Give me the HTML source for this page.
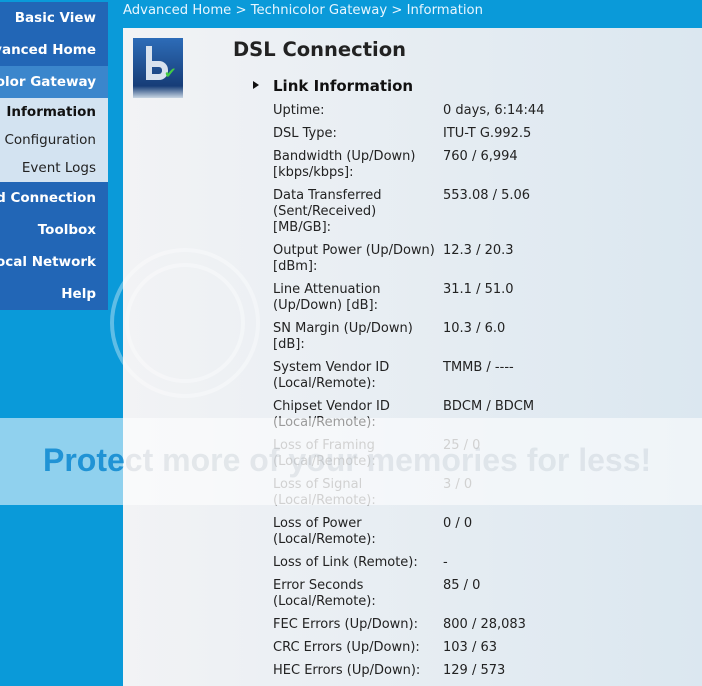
<!DOCTYPE html>
<html><head><meta charset="utf-8"><style>
*{margin:0;padding:0;box-sizing:border-box}
body{width:702px;height:686px;overflow:hidden;background:#0a9ad9;font-family:"DejaVu Sans","Liberation Sans",sans-serif;position:relative}
.crumb{position:absolute;left:123px;top:3px;color:#e8f6ff;font-size:13.2px}
.side{position:absolute;left:0;top:2px;width:108px}
.side div{height:32px;line-height:32px;text-align:right;padding-right:12px;color:#fff;font-weight:bold;font-size:13.5px;background:#2266b6;white-space:nowrap;overflow:hidden;direction:rtl}
.side div.sel{background:#3b86cc}
.side div.sub{background:#d3e3f1;color:#222;font-weight:normal;height:28px;line-height:28px}
.side div.sub.b{font-weight:bold;color:#111}
.panel{position:absolute;left:123px;top:28px;right:0;bottom:0;background:linear-gradient(90deg,#f2f3f5,#dbe7f0)}
.logo{position:absolute;left:133px;top:38px;width:50px;height:60px;background:linear-gradient(#2d6cb8,#173d77 80%,#c8d5e2);overflow:hidden}
.lb1{position:absolute;left:13px;top:8px;width:6px;height:34px;background:#d8e2ee}
.lb2{position:absolute;left:13px;top:23px;width:22px;height:19px;border:6px solid #d8e2ee;border-left:none;border-radius:0 9px 9px 0}
.ck{position:absolute;left:31px;top:26px;color:#4c4;font-size:15px;font-weight:bold}
h1{position:absolute;left:233px;top:38px;font-size:19.5px;color:#222;font-weight:bold}
h2{position:absolute;left:273px;top:77px;font-size:15px;color:#111;font-weight:bold}
.arr{position:absolute;left:253px;top:81px;width:0;height:0;border-left:6px solid #111;border-top:4px solid transparent;border-bottom:4px solid transparent}
.r{position:absolute;left:273px;font-size:13px;line-height:16px;color:#222}
.r b{font-weight:normal;position:absolute;left:170px;top:0;white-space:nowrap}
.g{color:#999}
.band{position:absolute;left:0;top:418px;width:702px;height:87px;background:rgba(255,255,255,.55)}
.wm{position:absolute;left:43px;top:442px;font-size:32px;font-weight:bold;color:rgba(20,140,210,.9);font-family:"Liberation Sans",sans-serif;white-space:nowrap}
.wm span{color:rgba(180,190,200,.3)}
.ring{position:absolute;border:4px solid rgba(255,255,255,.35);border-radius:50%}
</style></head><body>
<div class="crumb">Advanced Home &gt; Technicolor Gateway &gt; Information</div>
<div class="side">
<div>Basic View</div><div>Advanced Home</div><div class="sel">Technicolor Gateway</div>
<div class="sub b">Information</div><div class="sub">Configuration</div><div class="sub">Event Logs</div>
<div>Broadband Connection</div><div>Toolbox</div><div>Home Local Network</div><div>Help</div>
</div>
<div class="panel"></div>
<div class="ring" style="left:110px;top:248px;width:150px;height:150px"></div>
<div class="ring" style="left:125px;top:263px;width:120px;height:120px"></div>
<div class="logo"><div class="lb1"></div><div class="lb2"></div><div class="ck">✔</div></div>
<h1>DSL Connection</h1>
<div class="arr"></div><h2>Link Information</h2>
<div class="r" style="top:103px">Uptime:<b>0 days, 6:14:44</b></div>
<div class="r" style="top:126px">DSL Type:<b>ITU-T G.992.5</b></div>
<div class="r" style="top:149px">Bandwidth (Up/Down)<br>[kbps/kbps]:<b>760 / 6,994</b></div>
<div class="r" style="top:188px">Data Transferred<br>(Sent/Received)<br>[MB/GB]:<b>553.08 / 5.06</b></div>
<div class="r" style="top:243px">Output Power (Up/Down)<br>[dBm]:<b>12.3 / 20.3</b></div>
<div class="r" style="top:282px">Line Attenuation<br>(Up/Down) [dB]:<b>31.1 / 51.0</b></div>
<div class="r" style="top:321px">SN Margin (Up/Down)<br>[dB]:<b>10.3 / 6.0</b></div>
<div class="r" style="top:360px">System Vendor ID<br>(Local/Remote):<b>TMMB / ----</b></div>
<div class="r" style="top:399px">Chipset Vendor ID<br>(Local/Remote):<b>BDCM / BDCM</b></div>
<div class="r g" style="top:438px">Loss of Framing<br>(Local/Remote):<b>25 / 0</b></div>
<div class="r g" style="top:477px">Loss of Signal<br>(Local/Remote):<b>3 / 0</b></div>
<div class="r" style="top:516px">Loss of Power<br>(Local/Remote):<b>0 / 0</b></div>
<div class="r" style="top:555px">Loss of Link (Remote):<b>-</b></div>
<div class="r" style="top:578px">Error Seconds<br>(Local/Remote):<b>85 / 0</b></div>
<div class="r" style="top:617px">FEC Errors (Up/Down):<b>800 / 28,083</b></div>
<div class="r" style="top:640px">CRC Errors (Up/Down):<b>103 / 63</b></div>
<div class="r" style="top:663px">HEC Errors (Up/Down):<b>129 / 573</b></div>
<div class="band"></div>
<div class="wm">Prote<span>ct more of your memories for less!</span></div>
</body></html>
